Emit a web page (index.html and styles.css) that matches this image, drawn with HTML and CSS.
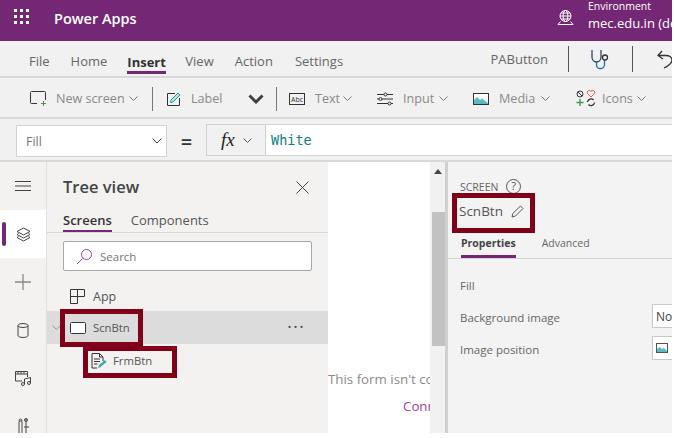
FILE: index.html
```html
<!DOCTYPE html>
<html lang="en">
<head>
<meta charset="utf-8">
<title>Power Apps</title>
<link rel="stylesheet" href="styles.css">
</head>
<body>
<div class="app">
  <header class="topbar">
    <svg class="waffle" width="16" height="16" viewBox="0 0 16 16" fill="#fff"><rect x="0" y="0" width="3" height="3"/><rect x="6" y="0" width="3" height="3"/><rect x="12" y="0" width="3" height="3"/><rect x="0" y="6" width="3" height="3"/><rect x="6" y="6" width="3" height="3"/><rect x="12" y="6" width="3" height="3"/><rect x="0" y="12" width="3" height="3"/><rect x="6" y="12" width="3" height="3"/><rect x="12" y="12" width="3" height="3"/></svg>
    <span class="brand">Power Apps</span>
    <svg class="globe" width="17" height="17" viewBox="0 0 17 17" fill="none" stroke="#fff" stroke-width="1"><circle cx="8.5" cy="7" r="5.5"/><ellipse cx="8.5" cy="7" rx="2.4" ry="5.5"/><path d="M3 7h11M4 4h9M4 10h9M3.5 12.5 1 15.5h15l-2.500-3"/></svg>
    <div class="env">
      <span class="env-label">Environment</span>
      <span class="env-name">mec.edu.in (de</span>
    </div>
  </header>

  <nav class="tabs">
    <span class="tab tab-file">File</span>
    <span class="tab tab-home">Home</span>
    <span class="tab tab-insert">Insert</span>
    <span class="tab tab-view">View</span>
    <span class="tab tab-action">Action</span>
    <span class="tab tab-settings">Settings</span>
    <span class="app-name">PAButton</span>
    <span class="vline vline-a"></span>
    <svg class="steth" width="20" height="22" viewBox="0 0 20 22" fill="none" stroke-width="1.300"><path d="M2 2v7c0 3 2 5 4.500 5S11 12 11 9V2" stroke="#24456e" transform="translate(-1 0)"/><path d="M5.500 14v3c0 2.500 2 3.500 4 3.500s4-1.500 4-4V12" stroke="#1f6fb5"/><circle cx="14" cy="9.500" r="2.500" stroke="#333"/></svg>
    <span class="vline vline-b"></span>
    <svg class="undo" width="16" height="20" viewBox="0 0 16 20" fill="none" stroke="#333" stroke-width="1.300"><path d="M5 1 1 5.500 6 9M1 5.500h8c3.500 0 6 2 6 4.500 0 3.500-4 6-8 8"/></svg>
  </nav>

  <div class="toolbar">
    <svg class="ic-newscreen" width="18" height="15" viewBox="0 0 18 15" fill="none"><path d="M7 12.500H1.500a1 1 0 0 1-1-1v-10a1 1 0 0 1 1-1h13a1 1 0 0 1 1 1V9" stroke="#333"/><path d="M13.500 10v5M11 12.500h5" stroke="#3a9a46"/></svg>
    <span class="tool-label l-newscreen">New screen</span>
    <svg class="chev" width="9" height="5" viewBox="0 0 9 5" fill="none" stroke="#777"><path d="M.5.500l4 4 4-4"/></svg>
    <span class="tool-sep s-a"></span>
    <svg class="ic-label" width="14" height="14" viewBox="0 0 14 14" fill="none"><path d="M8 1.500H.5v12h12V6" stroke="#333"/><path d="M3.500 10.500 4 8l7-7 2 2-7 7z" stroke="#1d9a9a" fill="#b8e3e3"/></svg>
    <span class="tool-label l-label">Label</span>
    <svg class="bigchev" width="16" height="10" viewBox="0 0 16 10" fill="none" stroke="#404040" stroke-width="3"><path d="M1.500 1.500 8 8l6.500-6.500"/></svg>
    <span class="tool-sep s-b"></span>
    <svg class="ic-abc" width="16" height="12" viewBox="0 0 16 12"><rect x=".5" y=".5" width="15" height="11" fill="none" stroke="#333"/><text x="8" y="8.500" class="abc-text" text-anchor="middle">Abc</text></svg>
    <span class="tool-label l-text">Text</span>
    <svg class="chev" width="9" height="5" viewBox="0 0 9 5" fill="none" stroke="#777"><path d="M.5.500l4 4 4-4"/></svg>
    <svg class="ic-input" width="16" height="14" viewBox="0 0 16 14" fill="none" stroke="#333"><path d="M0 2.500h7M10 2.500h6M0 7h2M5 7h11M0 11.500h11M14 11.500h2"/><circle cx="8.500" cy="2.500" r="1.500"/><circle cx="3.500" cy="7" r="1.500"/><circle cx="12.500" cy="11.500" r="1.500"/></svg>
    <span class="tool-label l-input">Input</span>
    <svg class="chev" width="9" height="5" viewBox="0 0 9 5" fill="none" stroke="#777"><path d="M.5.500l4 4 4-4"/></svg>
    <svg class="ic-media" width="16" height="12" viewBox="0 0 16 12"><rect x=".5" y=".5" width="15" height="11" fill="#fff" stroke="#333"/><path d="M1 11V7l3-3 3 3 2-1.500L15 10v1z" fill="#58bcc0"/></svg>
    <span class="tool-label l-media">Media</span>
    <svg class="chev" width="9" height="5" viewBox="0 0 9 5" fill="none" stroke="#777"><path d="M.5.500l4 4 4-4"/></svg>
    <svg class="ic-icons" width="20" height="17" viewBox="0 0 20 17" fill="none"><circle cx="4" cy="4" r="3" stroke="#333"/><path d="M2 2l4 4" stroke="#333"/><path d="M15 7 11.500 3.500a2 2 0 0 1 3.500-2 2 2 0 0 1 3.500 2z" stroke="#e8603c"/><path d="M4 9v7M.5 12.500h7" stroke="#3a9a46" stroke-width="1.300"/><path d="M11.500 12a3.500 3.500 0 0 1 6-2M18.500 12.500a3.500 3.500 0 0 1-6 2" stroke="#333" stroke-width="1.300"/></svg>
    <span class="tool-label l-icons">Icons</span>
    <svg class="chev" width="9" height="5" viewBox="0 0 9 5" fill="none" stroke="#777"><path d="M.5.500l4 4 4-4"/></svg>
  </div>

  <div class="formula">
    <div class="prop-select">
      <span>Fill</span>
      <svg width="10" height="6" viewBox="0 0 10 6" fill="none" stroke="#444"><path d="M.5.500 5 5 9.500.500"/></svg>
    </div>
    <span class="equals">=</span>
    <div class="fx">
      <span class="fx-text">fx</span>
      <svg width="9" height="5" viewBox="0 0 9 5" fill="none" stroke="#555"><path d="M.5.500l4 4 4-4"/></svg>
    </div>
    <div class="formula-input">White</div>
  </div>

  <div class="main">
    <aside class="rail">
      <div class="rail-item">
        <svg width="16" height="10" viewBox="0 0 16 10" fill="none" stroke="#444"><path d="M0 .5h16M0 5h16M0 9.500h16"/></svg>
      </div>
      <div class="rail-item rail-active">
        <span class="rail-mark"></span>
        <svg width="15" height="15" viewBox="0 0 15 15" fill="none" stroke="#444"><path d="M7.500 1 14 4.500 7.500 8 1 4.500zM2.500 6.500 1 7.500 7.500 11 14 7.500l-1.500-1M2.500 9.500 1 10.500 7.500 14 14 10.500l-1.500-1"/></svg>
      </div>
      <div class="rail-item">
        <svg width="16" height="16" viewBox="0 0 16 16" fill="none" stroke="#888" stroke-width="1.300"><path d="M8 0v16M0 8h16"/></svg>
      </div>
      <div class="rail-item">
        <svg width="12" height="15" viewBox="0 0 12 15" fill="none" stroke="#444"><ellipse cx="6" cy="2.500" rx="5" ry="2"/><path d="M1 2.500v10c0 1 2 2 5 2s5-1 5-2v-10"/></svg>
      </div>
      <div class="rail-item">
        <svg width="17" height="15" viewBox="0 0 17 15" fill="none" stroke="#444"><path d="M7 10H.5V.5h12V6M.5 3h12M3 .5V3M6 .5V3M9 .5V3"/><path d="M9.500 13V8l6-1.500V12"/><circle cx="8" cy="13" r="1.500"/><circle cx="14" cy="12" r="1.500"/></svg>
      </div>
      <div class="rail-item">
        <svg width="11" height="17" viewBox="0 0 11 17" fill="none" stroke="#444"><rect x="1" y="3" width="3" height="14" rx="1"/><path d="M1 3a1.500 2 0 0 1 3 0"/><path d="M8 1v16M6 9h5"/><circle cx="8" cy="2" r="1.500"/></svg>
      </div>
    </aside>

    <section class="tree">
      <div class="tree-head">
        <h2 class="tree-title">Tree view</h2>
        <svg width="13" height="13" viewBox="0 0 13 13" fill="none" stroke="#444"><path d="M.5.500l12 12M12.500.500l-12 12"/></svg>
      </div>
      <div class="tree-tabs">
        <span class="tree-tab tree-tab-on">Screens</span>
        <span class="tree-tab">Components</span>
      </div>
      <div class="search">
        <svg width="17" height="17" viewBox="0 0 17 17" fill="none" stroke="#a23fa0"><circle cx="10.500" cy="6.500" r="5"/><path d="M6.500 10.500 1 16"/></svg>
        <span>Search</span>
      </div>
      <div class="row row-app">
        <svg width="15" height="15" viewBox="0 0 15 15" fill="none" stroke="#333"><path d="M.5.500h7v7h7V.5h-7M.5.500v14h7v-7h-7"/></svg>
        <span>App</span>
      </div>
      <div class="row row-screen">
        <svg class="row-chev" width="9" height="5" viewBox="0 0 9 5" fill="none" stroke="#999"><path d="M.5.500l4 4 4-4"/></svg>
        <svg width="16" height="12" viewBox="0 0 16 12"><rect x=".5" y=".5" width="15" height="11" rx="1" fill="#fff" stroke="#333"/></svg>
        <span class="row-name">ScnBtn</span>
        <span class="more">···</span>
        <span class="mark mark-screen"></span>
      </div>
      <div class="row row-form">
        <svg width="16" height="16" viewBox="0 0 16 16" fill="none"><path d="M6 15H1V.5h7.500L12 4v4M8.500.5V4H12M3 6h6M3 8.500h6M3 11h3.500" stroke="#333"/><path d="M7 15.500 8 12l6-5 1.500 2-6 5z" fill="#3aa6a6"/></svg>
        <span>FrmBtn</span>
        <span class="mark mark-form"></span>
      </div>
    </section>

    <section class="canvas">
      <p class="canvas-msg">This form isn't connected to any data yet.</p>
      <p class="canvas-link">Connect to data</p>
    </section>

    <div class="scroll">
      <svg width="8" height="5" viewBox="0 0 8 5" fill="#444"><path d="M0 5 4 0l4 5z"/></svg>
      <span class="thumb"></span>
    </div>

    <section class="props">
      <div class="props-kind">
        <span>SCREEN</span>
        <svg width="15" height="15" viewBox="0 0 15 15"><circle cx="7.500" cy="7.500" r="7" fill="none" stroke="#555"/><text x="7.500" y="11" class="help-text" text-anchor="middle">?</text></svg>
      </div>
      <div class="props-name">
        <span>ScnBtn</span>
        <svg width="13" height="13" viewBox="0 0 13 13" fill="none" stroke="#555"><path d="M1 12l.8-3.500L9.500 1 12 3.500 4.500 11z"/></svg>
        <span class="mark mark-props"></span>
      </div>
      <div class="props-tabs">
        <span class="props-tab props-tab-on">Properties</span>
        <span class="props-tab">Advanced</span>
      </div>
      <div class="prop-row prop-fill"><span>Fill</span></div>
      <div class="prop-row"><span>Background image</span><div class="prop-box">No</div></div>
      <div class="prop-row"><span>Image position</span><div class="prop-box">
        <svg width="12" height="10" viewBox="0 0 12 10"><rect x=".5" y=".5" width="11" height="9" fill="#fff" stroke="#555"/><path d="M1 9V6l2.500-2L6 6l2-1 3 3v1z" fill="#58bcc0"/></svg>
      </div></div>
    </section>
  </div>
</div>
</body>
</html>
```

FILE: styles.css
```css
* { box-sizing: border-box; }
html, body { margin: 0; padding: 0; background: #fff; }
body { font-family: "Open Sans", "Liberation Sans", sans-serif; color: #444; }
p, h2 { margin: 0; }
svg { display: block; flex: none; }

.app { width: 672px; height: 433px; overflow: hidden; display: flex; flex-direction: column; background: #f1f1f1; }

.topbar { height: 41px; flex: none; background: #742774; color: #fff; display: flex; align-items: center; padding-left: 14px; overflow: hidden; }
.waffle { margin-top: -8px; }
.brand { margin: -5px 0 0 24px; font-size: 14.5px; font-weight: 600; }
.globe { margin: -7px 0 0 auto; }
.env { width: 84px; margin: -10px 0 0 14px; display: flex; flex-direction: column; white-space: nowrap; overflow: hidden; flex: none; }
.env-label { font-size: 10.500px; line-height: 14px; }
.env-name { font-size: 13px; line-height: 20px; }

.tabs { height: 37px; flex: none; border-bottom: 2px solid #d8d8d8; display: flex; align-items: center; font-size: 13px; color: #666; padding-left: 29px; overflow: hidden; }
.tab { line-height: 41px; height: 35px; }
.tab-home { margin-left: 21px; }
.tab-insert { margin-left: 20px; font-weight: 700; color: #333; border-bottom: 3px solid #742774; height: 33px; line-height: 42px; width: 39px; align-self: flex-start; }
.tab-view { margin-left: 19px; }
.tab-action { margin-left: 21px; }
.tab-settings { margin-left: 22px; }
.app-name { margin-left: auto; }
.vline { width: 1px; height: 26px; background: #555; margin-top: 1px; }
.vline-a { margin-left: 20px; }
.steth { margin: 1px 0 0 22px; }
.vline-b { margin-left: 21px; }
.undo { margin: 2px -1px 0 24px; }

.toolbar { height: 41px; flex: none; border-bottom: 2px solid #d8d8d8; display: flex; align-items: center; padding: 2px 0 0 30px; font-size: 12.600px; color: #8a8a8a; }
.tool-label { line-height: 18px; white-space: nowrap; }
.tool-label + .chev { margin-left: 5px; }
.tool-sep { width: 1px; height: 24px; background: #777; }
.l-newscreen { margin-left: 8px; width: 68px; }
.s-a { margin-left: 14px; }
.ic-label { margin-left: 14px; }
.l-label { margin-left: 10px; width: 31px; }
.bigchev { margin-left: 26px; }
.s-b { margin-left: 12px; }
.ic-abc { margin-left: 12px; }
.l-text { margin-left: 10px; width: 23px; }
.ic-input { margin-left: 25px; }
.l-input { margin-left: 10px; width: 31px; }
.ic-media { margin-left: 25px; }
.l-media { margin-left: 10px; width: 37px; }
.ic-icons { margin-left: 26px; }
.l-icons { margin-left: 6px; width: 30px; }
.abc-text { font-size: 7px; fill: #333; font-family: "Open Sans", sans-serif; }

.formula { height: 43px; flex: none; border-bottom: 2px solid #d8d8d8; display: flex; align-items: flex-start; padding: 6px 0 0 16px; }
.prop-select { width: 151px; height: 32px; background: #fff; border: 1px solid #d2d2d2; display: flex; align-items: center; justify-content: space-between; padding: 0 4px 0 9px; font-size: 12.500px; color: #777; }
.equals { width: 39px; text-align: center; font-size: 20px; line-height: 34px; color: #333; font-weight: 600; }
.fx { width: 60px; height: 32px; margin-top: -1px; border: 1px solid #d2d2d2; display: flex; align-items: center; padding-left: 14px; gap: 5px; }
.fx-text { font-family: "Liberation Serif", serif; font-style: italic; font-size: 19px; color: #222; width: 17px; }
.formula-input { flex: 1; height: 32px; margin-top: -1px; background: #fff; border-top: 1px solid #d2d2d2; border-bottom: 1px solid #d2d2d2; font-family: "DejaVu Sans Mono", "Liberation Mono", monospace; font-size: 13.500px; line-height: 31px; color: #0f7d83; padding-left: 5px; }

.main { flex: 1; display: flex; min-height: 0; }

.rail { width: 47px; flex: none; background: #f3f2f1; border-right: 1px solid #e1dfdd; display: flex; flex-direction: column; }
.rail-item { height: 48px; flex: none; display: flex; align-items: center; justify-content: center; position: relative; }
.rail-active { background: #fff; width: 46px; }
.rail-mark { position: absolute; left: 2px; top: 12px; width: 4px; height: 24px; border-radius: 2px; background: #742774; }

.tree { width: 281px; flex: none; background: #f3f2f1; display: flex; flex-direction: column; }
.tree-head { height: 50px; flex: none; display: flex; align-items: center; justify-content: space-between; padding: 0 19px 0 16px; }
.tree-title { font-size: 16.500px; font-weight: 600; color: #444; line-height: 50px; }
.tree-tabs { height: 21px; flex: none; border-bottom: 1px solid #d8d8d8; display: flex; gap: 19px; padding-left: 16px; font-size: 13px; }
.tree-tab { color: #555; height: 20px; line-height: 17px; }
.tree-tab-on { color: #333; font-weight: 600; border-bottom: 2px solid #742774; height: 20px; }
.search { height: 30px; flex: none; margin: 8px 16px 0; background: #fff; border: 1px solid #a8a8a8; border-radius: 2px; display: flex; align-items: center; gap: 7px; padding-left: 12px; font-size: 11.500px; color: #777; }
.row { display: flex; align-items: center; font-size: 11.300px; color: #555; position: relative; flex: none; }
.row-app { height: 30px; margin-top: 10px; padding-left: 23px; gap: 8px; }
.row-app span { font-size: 12.500px; }
.row-screen { height: 33px; background: #dcdcdc; padding-left: 5px; }
.row-chev { margin-right: 9px; }
.row-name { margin-left: 7px; }
.more { position: absolute; left: 240px; top: 5px; font-size: 19px; line-height: 20px; letter-spacing: 1px; color: #555; }
.row-form { height: 33px; padding-left: 44px; gap: 6px; }

.mark { position: absolute; border: 5px solid #80001a; pointer-events: none; }
.mark-screen { left: 13px; top: -2px; width: 83px; height: 38px; }
.mark-form { left: 36px; top: 2px; width: 94px; height: 32px; }
.mark-props { left: -7px; top: -8px; width: 83px; height: 40px; }

.canvas { width: 102px; flex: none; background: #fff; overflow: hidden; white-space: nowrap; font-size: 13.300px; }
.canvas-msg { padding-top: 207px; line-height: 20px; color: #8a8a8a; }
.canvas-link { margin: 7px 0 0 75px; line-height: 20px; color: #a03ea5; }

.scroll { width: 18px; flex: none; background: #f1f1f1; border-right: 3px solid #d0d0d0; display: flex; flex-direction: column; align-items: center; padding: 7px 0 0 1px; }
.thumb { width: 13px; height: 134px; margin-top: 38px; background: #c2c2c2; }

.props { flex: 1; min-width: 0; background: #f3f3f3; display: flex; flex-direction: column; overflow: hidden; padding-top: 16px; }
.props-kind { display: flex; align-items: center; gap: 8px; padding-left: 12px; height: 18px; font-size: 10.500px; color: #666; }
.props-kind svg { margin-top: -2px; }
.help-text { font-size: 11px; fill: #555; font-family: "Open Sans", sans-serif; }
.props-name { position: relative; display: flex; align-items: center; gap: 8px; margin: 5px 0 0 11px; height: 20px; font-size: 13.500px; color: #555; flex: none; }
.props-tabs { display: flex; gap: 26px; height: 23px; margin-top: 15px; padding-left: 13px; border-bottom: 1px solid #d4d4d4; font-size: 10.500px; flex: none; }
.props-tab { color: #666; line-height: 14px; }
.props-tab-on { font-weight: 700; color: #444; height: 22px; border-bottom: 3px solid #742774; }
.prop-row { display: flex; align-items: center; justify-content: space-between; height: 32px; padding-left: 12px; font-size: 11.500px; color: #666; flex: none; white-space: nowrap; }
.prop-fill { margin-top: 10px; }
.prop-box { width: 20px; height: 24px; margin-top: -2px; background: #fff; border: 1px solid #c8c8c8; border-right: 0; padding-left: 3px; display: flex; align-items: center; overflow: hidden; font-size: 12px; color: #444; }
```
